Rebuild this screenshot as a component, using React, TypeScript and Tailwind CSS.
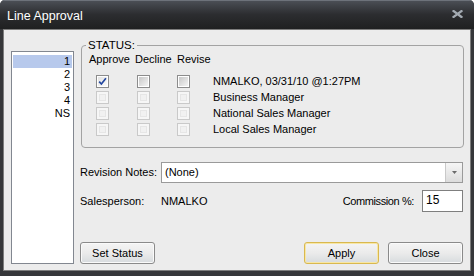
import React from "react";

function Check({ state }: { state: "checked" | "enabled" | "disabled" }) {
  if (state === "disabled") {
    return (
      <div className="w-[13px] h-[13px] shrink-0 border border-[#c9c9c9] bg-[#f6f6f6] flex items-center justify-center">
        <div className="w-[7px] h-[7px] border border-[#e6e6e6] bg-[#f1f1f1]" />
      </div>
    );
  }
  return (
    <div className="w-[13px] h-[13px] shrink-0 border border-[#8c8c8c] bg-white p-[1px]">
      <div
        className={
          state === "checked"
            ? "w-full h-full bg-gradient-to-br from-[#e2e2e2] to-[#fbfbfb] flex items-center justify-center"
            : "w-full h-full bg-gradient-to-br from-[#c7c7c7] to-[#f4f4f4]"
        }
      >
        {state === "checked" && (
          <svg width="9" height="9" viewBox="0 0 9 9">
            <path d="M1.2 4.6 L3.4 7 L7.9 1.3" fill="none" stroke="#23479f" strokeWidth="1.7" />
          </svg>
        )}
      </div>
    </div>
  );
}

function Btn({ children, focused }: { children: React.ReactNode; focused?: boolean }) {
  return (
    <div
      className={
        "h-[22px] w-[75px] rounded-[3px] border flex items-center justify-center bg-gradient-to-b from-[#f4f4f4] via-[#ebebeb] to-[#d7dbde] " +
        (focused
          ? "border-[#d9b84f] shadow-[inset_0_0_0_1px_#f7e7a6]"
          : "border-[#8a8a8a] shadow-[inset_0_0_0_1px_#fafafa]")
      }
    >
      {children}
    </div>
  );
}

export default function App() {
  const rows: { label: string; enabled: boolean }[] = [
    { label: "NMALKO, 03/31/10 @1:27PM", enabled: true },
    { label: "Business Manager", enabled: false },
    { label: "National Sales Manager", enabled: false },
    { label: "Local Sales Manager", enabled: false },
  ];
  const items = ["1", "2", "3", "4", "NS"];
  return (
    <div className="w-[474px] h-[276px] bg-[#36373a] flex flex-col overflow-hidden rounded-t-[5px] font-['Liberation_Sans',Arial,sans-serif] text-[11px] text-black">
      {/* title bar */}
      <div className="h-[29px] shrink-0 flex items-start justify-between pl-[7px] pr-[11px] bg-gradient-to-b from-[#4d5158] via-[#2c2d30] to-[#1f2021] shadow-[inset_0_1px_0_#6d727a]">
        <span className="mt-[9px] leading-[15px] text-[12.5px] text-white">Line Approval</span>
        <svg className="mt-[10px]" width="11" height="8" viewBox="0 0 11 8">
          <path d="M1.5 1 L9.5 7 M9.5 1 L1.5 7" stroke="#a3aab2" strokeWidth="2.2" strokeLinecap="square" />
        </svg>
      </div>
      {/* body */}
      <div className="flex-1 flex px-[3px] pb-[5px]">
        <div className="flex-1 bg-[#ececec] shadow-[inset_0_0_0_1px_#7d7d7d] flex pt-[10px] pl-[8px] pr-[7px] pb-[7px]">
          {/* list */}
          <div className="mt-[12px] w-[63px] border border-[#828790] bg-white pt-[3px] px-[1px]">
            {items.map((it, i) => (
              <div
                key={it}
                className={
                  "h-[13px] leading-[13px] text-right pr-[2px] " + (i === 0 ? "bg-[#b7c9ec]" : "")
                }
              >
                {it}
              </div>
            ))}
          </div>
          {/* right column */}
          <div className="ml-[6px] w-[384px] flex flex-col">
            <fieldset className="ml-[1px] w-[383px] border border-[#a3a3a3] rounded-[4px] pt-[2px] pb-[11px]">
              <legend className="ml-[4px] px-[2px] leading-[12px] text-[11.5px]">STATUS:</legend>
              <div className="flex pl-[7px] leading-[13px]">
                <span className="w-[46px]">Approve</span>
                <span className="w-[42px]">Decline</span>
                <span>Revise</span>
              </div>
              <div className="mt-[9px] flex flex-col gap-[3px]">
                {rows.map((r, i) => (
                  <div key={r.label} className="h-[13px] flex items-center pl-[14px]">
                    <Check state={i === 0 ? "checked" : r.enabled ? "enabled" : "disabled"} />
                    <div className="ml-[28px]">
                      <Check state={r.enabled ? "enabled" : "disabled"} />
                    </div>
                    <div className="ml-[27px]">
                      <Check state={r.enabled ? "enabled" : "disabled"} />
                    </div>
                    <span className="ml-[23px] leading-[13px]">{r.label}</span>
                  </div>
                ))}
              </div>
            </fieldset>
            {/* revision notes */}
            <div className="mt-[14px] flex items-center">
              <span className="w-[81px]">Revision Notes:</span>
              <div className="flex-1 mr-[1px] h-[21px] border border-[#9a9a9a] bg-white flex items-center">
                <span className="flex-1 pl-[3px]">(None)</span>
                <div className="w-[17px] h-[19px] border-l border-[#c9c9c9] bg-gradient-to-b from-[#f6f6f6] to-[#dcdcdc] flex items-center justify-center">
                  <svg width="5" height="3" viewBox="0 0 5 3">
                    <path d="M0 0 H5 L2.5 3 Z" fill="#6a6a6a" />
                  </svg>
                </div>
              </div>
            </div>
            {/* salesperson */}
            <div className="mt-[7px] flex items-center">
              <span className="w-[81px]">Salesperson:</span>
              <span className="flex-1">NMALKO</span>
              <span className="tracking-[-0.4px]">Commission %:</span>
              <div className="ml-[8px] mr-[1px] w-[41px] h-[22px] border border-[#7f7f7f] bg-white pl-[3px] pt-[2px] text-[12px] leading-[14px]">
                15
              </div>
            </div>
            {/* buttons */}
            <div className="mt-auto flex items-center">
              <Btn>Set Status</Btn>
              <div className="flex-1" />
              <Btn focused>Apply</Btn>
              <div className="ml-[9px] mr-[1px]">
                <Btn>Close</Btn>
              </div>
            </div>
          </div>
        </div>
      </div>
    </div>
  );
}
